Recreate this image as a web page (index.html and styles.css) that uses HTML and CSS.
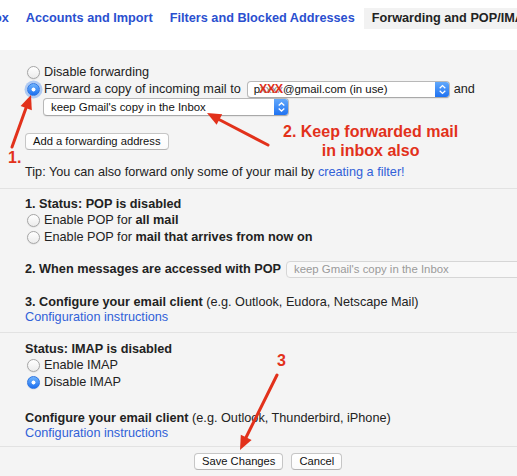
FILE: index.html
```html
<!DOCTYPE html>
<html>
<head>
<meta charset="utf-8">
<title>Forwarding and POP/IMAP</title>
<link rel="stylesheet" href="styles.css">
</head>
<body>
<nav class="tabs">
  <a class="tab">Inbox</a>
  <a class="tab">Accounts and Import</a>
  <a class="tab">Filters and Blocked Addresses</a>
  <a class="tab active">Forwarding and POP/IMAP</a>
</nav>
<main class="panel">
  <section class="sec sec-fwd">
    <div class="opt"><span class="radio"></span>Disable forwarding</div>
    <div class="opt"><span class="radio on focus"></span>Forward a copy of incoming mail to
      <span class="select email"><span class="sel-text">p<span class="mask">xxxx<span class="redx">XXX</span></span>@gmail.com (in use)</span><span class="sel-arrow"><svg width="15" height="17" viewBox="0 0 15 17"><path d="M4.7 7.2 L7.5 4.6 L10.3 7.2 M4.7 9.8 L7.5 12.4 L10.3 9.8" stroke="#fff" stroke-width="1.3" fill="none"/></svg></span></span>
      <span class="and">and</span></div>
    <div class="opt-sel"><span class="select keep"><span class="sel-text">keep Gmail's copy in the Inbox</span><span class="sel-arrow"><svg width="15" height="18" viewBox="0 0 15 18"><path d="M4.7 7.6 L7.5 5 L10.3 7.6 M4.7 10.4 L7.5 13 L10.3 10.4" stroke="#fff" stroke-width="1.3" fill="none"/></svg></span></span></div>
    <div class="btn-row"><button class="btn">Add a forwarding address</button></div>
    <p class="tip">Tip: You can also forward only some of your mail by <a class="link">creating a filter!</a></p>
  </section>

  <section class="sec sec-pop">
    <div class="head"><b>1. Status: POP is disabled</b></div>
    <div class="opt"><span class="radio"></span>Enable POP for&nbsp;<b>all mail</b></div>
    <div class="opt"><span class="radio"></span>Enable POP for&nbsp;<b>mail that arrives from now on</b></div>
    <div class="when"><b>2. When messages are accessed with POP</b><span class="select disabled"><span class="sel-text">keep Gmail's copy in the Inbox</span></span></div>
    <div class="head head-gap"><b>3. Configure your email client</b> (e.g. Outlook, Eudora, Netscape Mail)</div>
    <div class="head"><a class="link">Configuration instructions</a></div>
  </section>

  <section class="sec sec-imap">
    <div class="head"><b>Status: IMAP is disabled</b></div>
    <div class="opt"><span class="radio"></span>Enable IMAP</div>
    <div class="opt"><span class="radio on"></span>Disable IMAP</div>
    <div class="head head-gap2"><b>Configure your email client</b> (e.g. Outlook, Thunderbird, iPhone)</div>
    <div class="head"><a class="link">Configuration instructions</a></div>
  </section>

  <section class="sec actions">
    <button class="btn">Save Changes</button>
    <button class="btn">Cancel</button>
  </section>
</main>

<svg class="arrows" width="517" height="476" viewBox="0 0 517 476">
  <g stroke="#e2311b" stroke-width="3" stroke-linecap="round" fill="none">
    <line x1="12" y1="147" x2="26" y2="108"/>
    <line x1="268" y1="145" x2="219" y2="119.5"/>
    <line x1="277" y1="375" x2="246" y2="437.5"/>
  </g>
  <g fill="#e2311b">
    <polygon points="31,95 20.6,106 31.8,110.2"/>
    <polygon points="207,113 222.2,114.2 216.6,124.8"/>
    <polygon points="240,450 251.6,440.1 240.8,434.7"/>
  </g>
</svg>
<div class="note note1">1.</div>
<div class="note note2">2. Keep forwarded mail<br>in inbox also</div>
<div class="note note3">3</div>
</body>
</html>
```

FILE: styles.css
```css
* { box-sizing: border-box; }
html, body { margin: 0; padding: 0; }
body {
  width: 517px;
  height: 476px;
  overflow: hidden;
  position: relative;
  background: #fff;
  font-family: "Liberation Sans", Arial, Helvetica, sans-serif;
  font-size: 12.7px;
  line-height: 15px;
  color: #222;
}

/* tabs */
.tabs {
  display: flex;
  gap: 1px;
  height: 50px;
  padding-top: 8px;
  margin-left: -33px;
  white-space: nowrap;
}
.tab {
  display: block;
  padding: 0 8px;
  height: 21px;
  line-height: 21px;
  font-weight: bold;
  color: #2a4fcf;
  text-decoration: none;
}
.tab.active {
  background: #f2f2f2;
  color: #222;
  padding-right: 40px;
}

/* panel */
.panel {
  background: #f4f4f4;
  height: 426px;
}
.sec { padding-left: 25px; }
.sec + .sec { border-top: 1px solid #e2e2e2; }
.sec-fwd { padding-top: 14px; padding-bottom: 8px; }
.sec-pop { padding-top: 8px; padding-bottom: 7px; }
.sec-imap { padding-top: 9px; padding-bottom: 5px; }
.actions {
  display: flex;
  gap: 8px;
  padding: 6px 0 0 194px;
}

.opt {
  display: flex;
  align-items: center;
  height: 17px;
  white-space: nowrap;
}
.opt b { font-weight: bold; }
.opt-sel {
  display: flex;
  align-items: center;
  height: 18px;
  padding-left: 18px;
}
.head { height: 15px; white-space: nowrap; }
.head-gap { margin-top: 17px; }
.head-gap2 { margin-top: 20px; }
.when {
  display: flex;
  align-items: center;
  height: 18px;
  margin-top: 14px;
  white-space: nowrap;
}

/* radio */
.radio {
  width: 13px;
  height: 13px;
  flex: none;
  border-radius: 50%;
  margin: 0 4px 0 2px;
  border: 1px solid #a6a6a6;
  background: linear-gradient(#ffffff, #ececec);
  box-shadow: 0 0.5px 1px rgba(0, 0, 0, 0.12);
}
.radio.on {
  border-color: #2d74e2;
  background:
    radial-gradient(circle, #fff 0 1.7px, rgba(255,255,255,0) 2.3px),
    linear-gradient(#70b4fc, #1c6ff0);
}
.radio.focus {
  box-shadow: 0 0 0 2.5px rgba(118, 168, 240, 0.55);
}

/* selects */
.select {
  display: inline-flex;
  align-items: center;
  height: 17px;
  background: #fff;
  border: 1px solid #b8b8b8;
  border-bottom-color: #a9a9a9;
  border-radius: 4px;
  box-shadow: 0 1px 1px rgba(0, 0, 0, 0.06);
  font-size: 11.4px;
  color: #111;
  overflow: hidden;
  flex: none;
}
.sel-text {
  flex: 1;
  white-space: nowrap;
  padding-left: 6px;
}
.sel-arrow {
  display: flex;
  width: 15px;
  align-self: stretch;
  margin: -1px -1px -1px 0;
  border-radius: 0 4px 4px 0;
  background: linear-gradient(#66acfc, #1b6ff1);
}
.email { width: 203px; margin-left: 6px; }
.and { margin-left: 4px; }
.keep { width: 246px; height: 18px; }
.keep .sel-text { padding-left: 7px; }
.mask { position: relative; color: #888; }
.redx {
  position: absolute;
  left: -1px;
  top: -1px;
  color: #e0301b;
  font-weight: bold;
  font-size: 12.5px;
  letter-spacing: -0.5px;
}
.disabled {
  width: 260px;
  margin-left: 5px;
  background: #f8f8f8;
  border-color: #d6d6d6;
  box-shadow: none;
  color: #9a9a9a;
}
.disabled .sel-text { padding-left: 7px; }

/* buttons */
.btn-row { margin-top: 17px; display: flex; }
.btn {
  height: 17px;
  padding: 0 7px;
  margin: 0;
  background: linear-gradient(#ffffff, #fbfbfb);
  border: 1px solid #c6c6c6;
  border-bottom-color: #b4b4b4;
  border-radius: 4px;
  font-family: "Liberation Sans", Arial, Helvetica, sans-serif;
  font-size: 11.2px;
  line-height: 15px;
  color: #111;
  white-space: nowrap;
}

.tip { margin: 15px 0 0; height: 15px; white-space: nowrap; }
.link { color: #3161d8; text-decoration: none; }

/* annotations (overlay) */
.arrows {
  position: absolute;
  left: 0;
  top: 0;
  pointer-events: none;
}
.note {
  position: absolute;
  color: #e2311b;
  font-weight: bold;
  font-size: 16px;
  line-height: 16px;
  white-space: nowrap;
}
.note1 { left: 8px; top: 150px; }
.note2 { left: 283px; top: 121.5px; line-height: 19px; text-align: center; }
.note3 { left: 277px; top: 353px; }
```
